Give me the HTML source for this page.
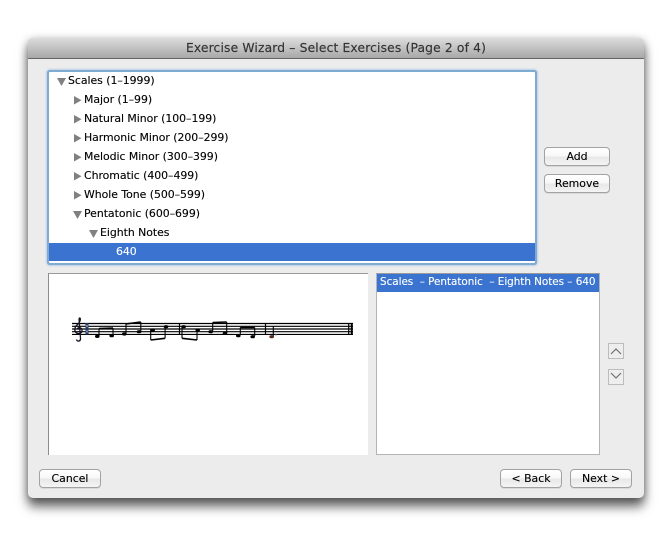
<!DOCTYPE html>
<html><head><meta charset="utf-8">
<style>
html,body{margin:0;padding:0;background:#fff}
body{width:672px;height:534px;position:relative;overflow:hidden;font-family:"DejaVu Sans","Liberation Sans",sans-serif;font-size:10.9px;color:#000}
.abs,.t,.btn{position:absolute}
#win{position:absolute;left:28px;top:38px;width:616px;height:460px;background:#ececec;border-radius:5px;box-shadow:0 9px 11px rgba(0,0,0,.55),0 2px 9px rgba(0,0,0,.35)}
#bar{position:absolute;left:28px;top:38px;width:616px;height:20px;border-radius:5px 5px 0 0;background:linear-gradient(#dcdcdc,#a8a8a8);border-bottom:1px solid #666;text-align:center;line-height:21px;font-size:12.3px;color:#333;letter-spacing:.15px;-webkit-text-stroke:.15px #333}
#tree{position:absolute;left:49px;top:72px;width:486px;height:191px;background:#fff;box-shadow:0 0 0 2px #7fabd3,0 0 2px 2.500px #a5c4e0;border-radius:1px}
.t{white-space:nowrap;line-height:14px;height:14px;letter-spacing:-.03px;-webkit-text-stroke:.12px currentColor}
.sel{position:absolute;background:#3b74d0}
.btn{height:17px;border:1px solid #a2a2a2;border-radius:4px;background:linear-gradient(#fff 0,#f8f8f8 45%,#e8e8e8 55%,#f4f4f4 100%);text-align:center;line-height:17px;font-size:10.9px;box-shadow:0 1px 0 rgba(0,0,0,.08);-webkit-text-stroke:.12px #000}
.sq{position:absolute;width:14px;height:14px;border:1px solid #bcbcbc;background:#eee}
</style></head>
<body>
<div id="win"></div>
<div id="bar">Exercise Wizard – Select Exercises (Page 2 of 4)</div>

<div id="tree"></div>
<div class="sel" style="left:49px;top:243px;width:486px;height:18px"></div>
<svg class="abs" style="left:0;top:0" width="672" height="534">
<g fill="#808080">
<path d="M57 78h9l-4.500 8z"/>
<path d="M74 96l7.500 4.200-7.500 4.300z"/>
<path d="M74 115l7.500 4.200-7.500 4.300z"/>
<path d="M74 134l7.500 4.200-7.500 4.300z"/>
<path d="M74 153l7.500 4.200-7.500 4.300z"/>
<path d="M74 172l7.500 4.200-7.500 4.300z"/>
<path d="M74 191l7.500 4.200-7.500 4.300z"/>
<path d="M73 211h9l-4.500 8z"/>
<path d="M89 230h9l-4.500 8z"/>
</g>
</svg>
<div class="t" style="left:68px;top:74px">Scales (1–1999)</div>
<div class="t" style="left:84px;top:93px">Major (1–99)</div>
<div class="t" style="left:84px;top:112px">Natural Minor (100–199)</div>
<div class="t" style="left:84px;top:131px">Harmonic Minor (200–299)</div>
<div class="t" style="left:84px;top:150px">Melodic Minor (300–399)</div>
<div class="t" style="left:84px;top:169px">Chromatic (400–499)</div>
<div class="t" style="left:84px;top:188px">Whole Tone (500–599)</div>
<div class="t" style="left:84px;top:207px">Pentatonic (600–699)</div>
<div class="t" style="left:100px;top:226px">Eighth Notes</div>
<div class="t" style="left:116px;top:245px;color:#fff">640</div>

<div class="btn" style="left:544px;top:147px;width:64px">Add</div>
<div class="btn" style="left:544px;top:174px;width:64px">Remove</div>

<div class="abs" style="left:48px;top:273px;width:320px;height:182px;background:#fff;box-sizing:border-box;border-left:1px solid #8c8c8c;border-top:1px solid #9a9a9a"></div>
<svg class="abs" style="left:0;top:0" width="672" height="534">
<g stroke="#000" fill="none">
<path d="M72 323.500H353M72 326.300H353M72 329H353M72 331.700H353M72 334.400H353" stroke-width="1.150"/>
<path d="M179.500 323v11.500M265.500 323v11.500M348.700 323v11.500" stroke-width="1.200"/>
<path d="M351.800 323v11.500" stroke-width="2"/>
<path d="M79 318.500l1.500 20c.2 3-3.500 3.500-4 1M79 318.500c2-2 2 3-1.500 6-3 2.500-3.500 6-1.500 8 2 2 6 1 6-2 0-3-4-4-5-1" stroke="#112" stroke-width="1.300"/>
<path d="M99 336v-7.500M113 335v-7M126 334v-10M140.800 331.500V322M150.700 329v11M165.100 338.300V326.500M182 326v12.300M197 340v-10M212.700 331v-8.500M226.700 333V322M240.300 335v-7.500M254.700 336v-8.500M273.300 336v-9.500" stroke-width="1.100"/>
<path d="M99 328.500l14-.5M126 324l14.800-2M150.700 340l14.400-1.700M182 338.300l15 1.700M212.700 322.500l14-.5M240.300 327.500h14.400" stroke-width="1.600"/>
</g>
<path d="M85.500 323h3v11.500h-3z" fill="#223a66"/>
<path d="M86.300 325h1.400v2h-1.400zM86.300 330.500h1.400v2h-1.400z" fill="#9ab"/>
<g fill="#000">
<ellipse cx="97.300" cy="336.400" rx="2.300" ry="1.600"/><ellipse cx="111.700" cy="335.700" rx="2.300" ry="1.600"/>
<ellipse cx="124.300" cy="334" rx="2.300" ry="1.600"/><ellipse cx="139" cy="331.700" rx="2.300" ry="1.600"/>
<ellipse cx="152.700" cy="330" rx="2.300" ry="1.600"/><ellipse cx="166" cy="326.700" rx="2.300" ry="1.600"/>
<ellipse cx="183.600" cy="326.700" rx="2.300" ry="1.600"/><ellipse cx="197.700" cy="330" rx="2.300" ry="1.600"/>
<ellipse cx="210.700" cy="331.700" rx="2.300" ry="1.600"/><ellipse cx="225" cy="333.300" rx="2.300" ry="1.600"/>
<ellipse cx="238.300" cy="335.700" rx="2.300" ry="1.600"/><ellipse cx="252.700" cy="336.700" rx="2.300" ry="1.600"/>
<ellipse cx="271.700" cy="336.700" rx="2.300" ry="1.600" fill="#5a2a20"/>
<circle cx="276" cy="335" r=".7" fill="#68a"/>
</g>
</svg>

<div class="abs" style="left:376px;top:273px;width:224px;height:182px;background:#fff;box-sizing:border-box;border:1px solid #b4b4b4;border-top-color:#9a9a9a"></div>
<div class="sel" style="left:377px;top:274px;width:222px;height:18px"></div>
<div class="t" style="left:380px;top:275px;color:#fff;font-size:10.4px">Scales&nbsp; – Pentatonic&nbsp; – Eighth Notes – 640</div>

<div class="sq" style="left:608px;top:343px"></div>
<div class="sq" style="left:608px;top:369px"></div>
<svg class="abs" style="left:0;top:0" width="672" height="534">
<path d="M611 354l5-5 5 5M611 373l5 5 5-5" fill="none" stroke="#707070" stroke-width="1.200"/>
</svg>

<div class="btn" style="left:39px;top:469px;width:60px">Cancel</div>
<div class="btn" style="left:500px;top:469px;width:60px">&lt; Back</div>
<div class="btn" style="left:570px;top:469px;width:60px">Next &gt;</div>
</body></html>
